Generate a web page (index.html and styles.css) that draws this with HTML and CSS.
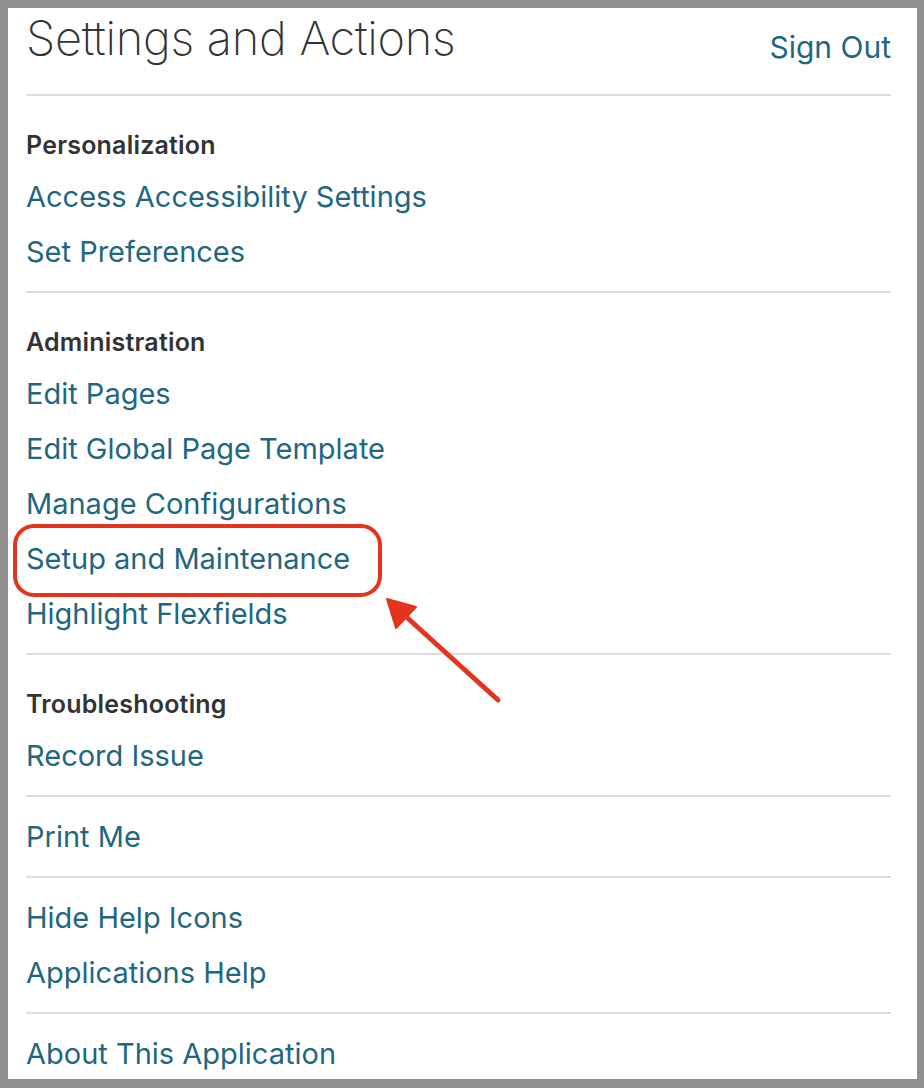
FILE: index.html
```html
<!DOCTYPE html>
<html lang="en">
<head>
<meta charset="utf-8">
<title>Settings and Actions</title>
<link rel="stylesheet" href="styles.css">
</head>
<body>
<div class="panel">
  <div class="header">
    <h1 class="title">Settings and Actions</h1>
    <a class="link signout">Sign Out</a>
  </div>
  <div class="section">
    <div class="heading">Personalization</div>
    <a class="link">Access Accessibility Settings</a>
    <a class="link">Set Preferences</a>
  </div>
  <div class="section">
    <div class="heading">Administration</div>
    <a class="link">Edit Pages</a>
    <a class="link">Edit Global Page Template</a>
    <a class="link">Manage Configurations</a>
    <a class="link">Setup and Maintenance</a>
    <a class="link">Highlight Flexfields</a>
  </div>
  <div class="section">
    <div class="heading">Troubleshooting</div>
    <a class="link">Record Issue</a>
  </div>
  <div class="section plain">
    <a class="link">Print Me</a>
  </div>
  <div class="section plain">
    <a class="link">Hide Help Icons</a>
    <a class="link">Applications Help</a>
  </div>
  <div class="section plain">
    <a class="link">About This Application</a>
  </div>
</div>
<svg class="annotation" width="924" height="1088" viewBox="0 0 924 1088">
  <rect x="15" y="526" width="365" height="69" rx="19" ry="19" fill="none" stroke="#e4341e" stroke-width="4"/>
  <line x1="498" y1="700" x2="402" y2="613" stroke="#e4341e" stroke-width="5" stroke-linecap="round"/>
  <polygon points="387,599 416,607 396,628" fill="#e4341e" stroke="#e4341e" stroke-width="2" stroke-linejoin="round"/>
</svg>
</body>
</html>
```
FILE: styles.css
```css
html, body {
  margin: 0;
  padding: 0;
}
body {
  background: #8f8f8f;
  width: 924px;
  height: 1088px;
  position: relative;
  font-family: Inter, "Noto Sans", "Liberation Sans", sans-serif;
  overflow: hidden;
}
.panel {
  box-sizing: border-box;
  margin: 8px 7px 0 8px;
  height: 1071px;
  background: #ffffff;
  padding: 0 26px 0 18px;
  display: flex;
  flex-direction: column;
  overflow: hidden;
}
.panel > * {
  flex-shrink: 0;
}
.header {
  display: flex;
  justify-content: space-between;
  align-items: flex-start;
  height: 86px;
}
.title {
  margin: 0;
  font-size: 47px;
  font-weight: 200;
  line-height: 60px;
  color: #333333;
  letter-spacing: -0.3px;
}
.link {
  display: block;
  font-size: 29px;
  line-height: 55px;
  color: #1f6780;
  text-decoration: none;
  white-space: nowrap;
}
.signout {
  line-height: 34px;
  margin-top: 22px;
  font-size: 30px;
}
.section {
  border-top: 2px solid #dddddd;
  padding: 34px 0 12px;
  display: flex;
  flex-direction: column;
}
.section.plain {
  padding-top: 12px;
}
.heading {
  font-size: 25px;
  font-weight: 600;
  line-height: 30px;
  color: #333333;
  margin-bottom: 9px;
  letter-spacing: 0.2px;
}
.annotation {
  position: absolute;
  left: 0;
  top: 0;
  pointer-events: none;
}
```
